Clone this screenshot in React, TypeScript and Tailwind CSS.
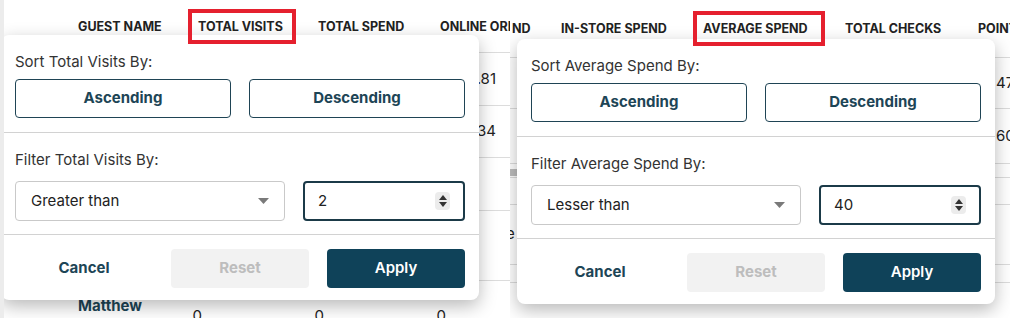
import React from 'react';

interface FilterPopoverProps {
  field: string;
  op: string;
  value: string;
}

const Caret: React.FC = () => (
  <svg width="11" height="6" viewBox="0 0 11 6" className="shrink-0">
    <path d="M0 0 H11 L5.5 6 Z" fill="#7a7a7a" />
  </svg>
);

const Spinner: React.FC = () => (
  <span className="flex h-[18px] w-[15px] flex-col items-center justify-center gap-[2px] rounded-sm bg-[#ececec]">
    <svg width="8" height="5" viewBox="0 0 8 5">
      <path d="M0 5 L4 0 L8 5 Z" fill="#333" />
    </svg>
    <svg width="8" height="5" viewBox="0 0 8 5">
      <path d="M0 0 H8 L4 5 Z" fill="#333" />
    </svg>
  </span>
);

const FilterPopover: React.FC<FilterPopoverProps> = ({ field, op, value }) => {
  return (
    <div className="w-[478px] rounded-lg bg-white shadow-[0_6px_18px_rgba(0,0,0,0.28)]">
      {/* Sort */}
      <div className="border-b border-[#d2d2d2] px-[14px] pt-[17px] pb-[14px]">
        <p className="text-[15px] leading-[20px] text-[#333]">Sort {field} By:</p>
        <div className="mt-[7px] grid grid-cols-2 gap-[18px]">
          <button className="h-[39px] rounded border border-[#1f4455] text-[15px] font-bold text-[#1d4556]">Ascending</button>
          <button className="h-[39px] rounded border border-[#1f4455] text-[15px] font-bold text-[#1d4556]">Descending</button>
        </div>
      </div>

      {/* Filter */}
      <div className="border-b border-[#d2d2d2] px-[14px] pt-[17px] pb-[13px]">
        <p className="text-[15px] leading-[20px] text-[#333]">Filter {field} By:</p>
        <div className="mt-[11px] flex gap-[18px]">
          <div className="flex h-[40px] w-[270px] items-center justify-between rounded border border-[#c9c9c9] pl-[15px] pr-[15px] text-[15px] text-[#222]">
            <span>{op}</span>
            <Caret />
          </div>
          <div className="flex h-[40px] flex-1 items-center justify-between rounded border-2 border-[#1b3a48] pl-[13px] pr-[13px] text-[15px] text-[#222]">
            <span>{value}</span>
            <Spinner />
          </div>
        </div>
      </div>

      {/* Actions */}
      <div className="grid grid-cols-3 gap-[18px] px-[14px] pt-[14px] pb-[12px]">
        <button className="h-[39px] text-[15px] font-bold text-[#1d4556]">Cancel</button>
        <button className="h-[39px] rounded bg-[#f2f2f2] text-[15px] font-bold text-[#bdbdbd]">Reset</button>
        <button className="h-[39px] rounded bg-[#0f4259] text-[15px] font-semibold text-white">Apply</button>
      </div>
    </div>
  );
};

const App: React.FC = () => {
  return (
    <div className="flex h-[318px] w-[1010px] overflow-hidden bg-white font-[Inter,sans-serif]">
      {/* Left capture: Total Visits */}
      <div className="relative h-full w-[510px] shrink-0 overflow-hidden border-l-4 border-[#ececec]">
        <div className="flex pt-[9px] text-[12.5px] font-bold uppercase leading-[17px] text-[#222] whitespace-nowrap">
          <div className="w-[74px] shrink-0" />
          <div className="w-[120px] shrink-0 border-y-4 border-transparent py-[5px]">Guest Name</div>
          <div className="w-[120px] shrink-0">
            <span className="relative z-10 -ml-[10px] inline-block border-4 border-[#e5202e] py-[5px] pl-[6px] pr-[9px]">Total Visits</span>
          </div>
          <div className="w-[122px] shrink-0 border-y-4 border-transparent py-[5px]">Total Spend</div>
          <div className="w-[120px] shrink-0 border-y-4 border-transparent py-[5px]">Online Order Spend</div>
        </div>
        <div className="mt-[8px] text-[15px] text-[#222]">
          <div className="border-t border-[#dcdcdc]" />
          <div className="flex h-[53px] items-center border-b border-[#dcdcdc]">
            <div className="w-[396px] shrink-0" />
            <div className="w-[96px] shrink-0 text-right">$212.81</div>
          </div>
          <div className="flex h-[52px] items-center border-b border-[#dcdcdc]">
            <div className="w-[396px] shrink-0" />
            <div className="w-[96px] shrink-0 text-right">$118.34</div>
          </div>
          <div className="h-[53px] border-b border-[#dcdcdc]" />
          <div className="h-[70px] border-b border-[#dcdcdc]" />
          <div className="flex h-[40px] items-start pt-[16px] font-bold leading-[18px] text-[#1d4556]">
            <div className="w-[74px] shrink-0" />
            <div className="w-[120px] shrink-0">Matthew</div>
          </div>
        </div>
        <div className="pointer-events-none absolute left-[74px] top-[305px] flex text-[15px] text-[#222]">
          <span className="w-[124px] text-right">0</span>
          <span className="w-[122px] text-right">0</span>
          <span className="w-[122px] text-right">0</span>
        </div>
        <div className="absolute left-[-3px] top-[35px]">
          <FilterPopover field="Total Visits" op="Greater than" value="2" />
        </div>
      </div>

      {/* Right capture: Average Spend */}
      <div className="relative h-full w-[500px] shrink-0 overflow-hidden">
        <div className="flex pt-[11px] text-[12.5px] font-bold uppercase leading-[17px] text-[#222] whitespace-nowrap">
          <div className="w-[51px] shrink-0 border-y-4 border-transparent py-[5px] pl-[2px]">nd</div>
          <div className="w-[142px] shrink-0 border-y-4 border-transparent py-[5px]">In-Store Spend</div>
          <div className="w-[142px] shrink-0">
            <span className="relative z-10 -ml-[10px] inline-block border-4 border-[#e5202e] py-[5px] pl-[6px] pr-[13px]">Average Spend</span>
          </div>
          <div className="w-[133px] shrink-0 border-y-4 border-transparent py-[5px]">Total Checks</div>
          <div className="w-[60px] shrink-0 border-y-4 border-transparent py-[5px]">Points</div>
        </div>
        <div className="mt-[11px] text-[15px] text-[#222]">
          <div className="flex h-[52px] items-center border-y border-[#dcdcdc]">
            <div className="w-[486px] shrink-0" />
            <div>471</div>
          </div>
          <div className="flex h-[55px] items-center border-b border-[#dcdcdc]">
            <div className="w-[486px] shrink-0" />
            <div>60</div>
          </div>
          <div className="h-[14px] border-b border-[#dcdcdc]" />
          <div className="h-[27px] border-b border-[#dcdcdc]">
            <div className="h-[7px] w-[7px] -translate-y-[9px] bg-[#bdbdbd]" />
          </div>
          <div className="flex h-[60px] items-center border-b border-[#dcdcdc]">
            <div className="-ml-[4px]">e</div>
          </div>
          <div className="h-[18px] border-b border-[#dcdcdc]" />
        </div>
        <div className="absolute left-[7px] top-[39px]">
          <FilterPopover field="Average Spend" op="Lesser than" value="40" />
        </div>
      </div>
    </div>
  );
};

export default App;
